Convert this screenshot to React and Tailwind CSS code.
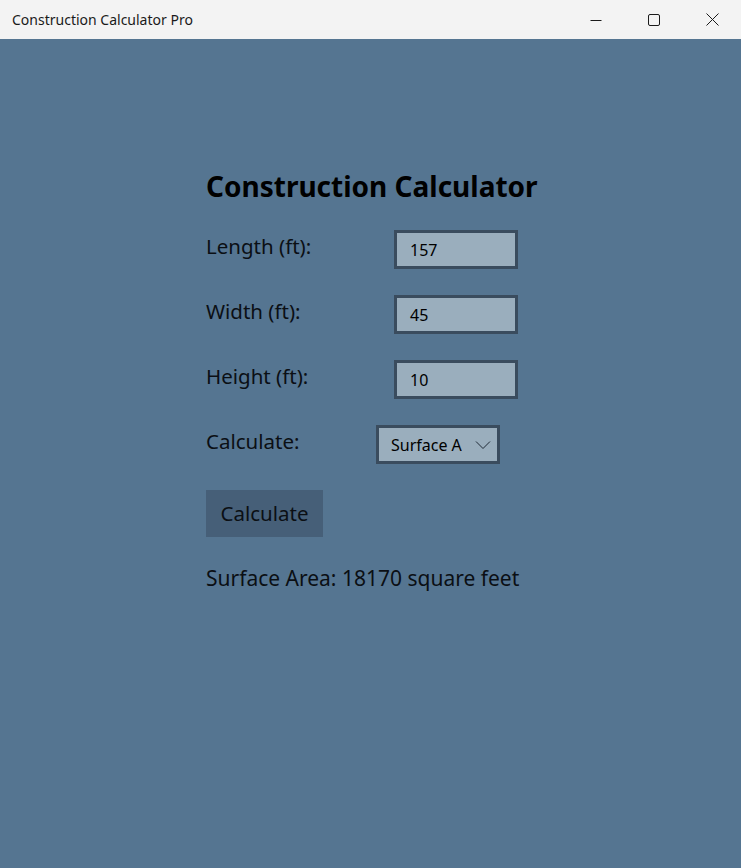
const font = { fontFamily: '"Noto Sans", "Open Sans", sans-serif' }

function Field({ label, value, labelWidth = 'w-[188px]' }) {
  return (
    <div className="flex items-start h-[65px]">
      <div className={`${labelWidth} pt-[1px] text-[20.5px] leading-[30px] text-[#0b0f14]`}>{label}</div>
      <div className="w-[124px] h-[39px] border-[3px] border-[#3a4c5e] bg-[#9aaebd] flex items-center pl-[13px] text-[16px] text-black">
        {value}
      </div>
    </div>
  )
}

export default function App() {
  return (
    <div className="w-[741px] h-[868px] flex flex-col bg-[#557591]" style={font}>
      {/* title bar */}
      <div className="h-[39px] flex items-center bg-[#f3f3f3] text-[14px] text-[#1a1a1a]">
        <span className="pl-[12px] flex-1">Construction Calculator Pro</span>
        <div className="flex items-center h-full">
          <div className="w-[58px] h-full flex items-center justify-center">
            <svg width="12" height="12" viewBox="0 0 12 12"><path d="M0.5 6.5h11" stroke="#1a1a1a" strokeWidth="1" /></svg>
          </div>
          <div className="w-[58px] h-full flex items-center justify-center">
            <svg width="12" height="12" viewBox="0 0 12 12"><rect x="0.5" y="0.5" width="11" height="11" rx="1.5" fill="none" stroke="#1a1a1a" strokeWidth="1" /></svg>
          </div>
          <div className="w-[58px] h-full flex items-center justify-center">
            <svg width="13" height="13" viewBox="0 0 13 13"><path d="M0.5 0.5l12 12M12.5 0.5l-12 12" stroke="#1a1a1a" strokeWidth="1" /></svg>
          </div>
        </div>
      </div>

      {/* form */}
      <div className="flex flex-col pl-[206px] pt-[128px]">
        <h1 className="text-[28px] leading-[38px] font-bold text-black h-[63px]">Construction Calculator</h1>
        <Field label="Length (ft):" value="157" />
        <Field label="Width (ft):" value="45" />
        <Field label="Height (ft):" value="10" />
        <div className="flex items-start h-[65px]">
          <div className="w-[170px] pt-[1px] text-[20.5px] leading-[30px] text-[#0b0f14]">Calculate:</div>
          <div className="w-[124px] h-[39px] border-[3px] border-[#3a4c5e] bg-[#9aaebd] flex items-center pl-[12px] text-[16px] text-black">
            <span className="overflow-hidden whitespace-nowrap w-[71px]">Surface Area</span>
            <svg width="16" height="10" viewBox="0 0 16 10" className="ml-[13px]">
              <path d="M1 1.5l7 7 7-7" fill="none" stroke="#1f2a36" strokeWidth="1" />
            </svg>
          </div>
        </div>
        <button className="w-[117px] h-[47px] bg-[#465f78] text-[20.5px] text-[#0b0f14] flex items-center justify-center">
          Calculate
        </button>
        <p className="mt-[26px] text-[21px] leading-[30px] text-[#0b0f14]">Surface Area: 18170 square feet</p>
      </div>
    </div>
  )
}
